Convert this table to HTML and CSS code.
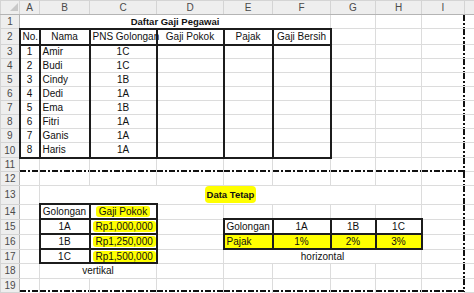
FILE: index.html
```html
<!DOCTYPE html>
<html lang="id">

<head>
    <meta charset="utf-8">
    <meta name="viewport" content="width=device-width, initial-scale=1.0">
    <title>Daftar Gaji Pegawai</title>

    <link rel="stylesheet" href="styles.css">
</head>

<body>
    <table class="sheet">
        <colgroup>
            <col class="w-rh">
            <col class="w-a">
            <col class="w-b">
            <col class="w-c">
            <col class="w-d">
            <col class="w-e">
            <col class="w-f">
            <col class="w-g">
            <col class="w-h">
            <col class="w-i">
            <col class="w-j">
        </colgroup>
        <thead>
            <tr class="heads">
                <th class="corner"><span class="tri"></span></th>
                <th>A</th><th>B</th><th>C</th><th>D</th><th>E</th>
                <th>F</th><th>G</th><th>H</th><th>I</th><th></th>
            </tr>
        </thead>
        <tbody>
            <tr>
                <th>1</th>
                <td colspan="6" class="judul">Daftar Gaji Pegawai</td>
                <td></td><td></td><td class="dd-r"></td><td></td>
            </tr>
            <tr class="h16">
                <th>2</th>
                <td class="box">No.</td>
                <td class="box">Nama</td>
                <td class="box">PNS Golongan</td>
                <td class="box">Gaji Pokok</td>
                <td class="box">Pajak</td>
                <td class="box">Gaji Bersih</td>
                <td></td><td></td><td class="dd-r"></td><td></td>
            </tr>
        </tbody>
        <tbody id="pegawai"></tbody>
        <tbody>
            <tr>
                <th>11</th>
                <td class="dd-b"></td><td class="dd-b"></td><td class="dd-b"></td><td class="dd-b"></td>
                <td class="dd-b"></td><td class="dd-b"></td><td class="dd-b"></td><td class="dd-b"></td>
                <td class="dd-b dd-r"></td><td></td>
            </tr>
            <tr>
                <th>12</th>
                <td></td><td></td><td></td><td></td><td></td><td></td><td></td><td></td>
                <td class="dd-r"></td><td></td>
            </tr>
            <tr class="h15">
                <th>13</th>
                <td></td>
                <td colspan="7" class="judul"><span class="stabilo besar">Data Tetap</span></td>
                <td class="dd-r"></td><td></td>
            </tr>
            <tr class="h15">
                <th>14</th>
                <td></td>
                <td class="box">Golongan</td>
                <td class="box"><span class="stabilo">Gaji Pokok</span></td>
                <td></td><td></td><td></td><td></td><td></td>
                <td class="dd-r"></td><td></td>
            </tr>
            <tr class="h15">
                <th>15</th>
                <td></td>
                <td class="box">1A</td>
                <td class="box"><span class="stabilo">Rp1,000,000</span></td>
                <td></td>
                <td class="box kiri">Golongan</td>
                <td class="box">1A</td>
                <td class="box">1B</td>
                <td class="box">1C</td>
                <td class="dd-r"></td><td></td>
            </tr>
            <tr class="h15">
                <th>16</th>
                <td></td>
                <td class="box">1B</td>
                <td class="box"><span class="stabilo">Rp1,250,000</span></td>
                <td></td>
                <td class="box kiri kuning">Pajak</td>
                <td class="box kuning">1%</td>
                <td class="box kuning">2%</td>
                <td class="box kuning">3%</td>
                <td class="dd-r"></td><td></td>
            </tr>
            <tr>
                <th>17</th>
                <td></td>
                <td class="box">1C</td>
                <td class="box"><span class="stabilo">Rp1,500,000</span></td>
                <td></td>
                <td colspan="4">horizontal</td>
                <td class="dd-r"></td><td></td>
            </tr>
            <tr class="h15">
                <th>18</th>
                <td></td>
                <td colspan="2">vertikal</td>
                <td></td><td></td><td></td><td></td><td></td>
                <td class="dd-r"></td><td></td>
            </tr>
            <tr>
                <th>19</th>
                <td class="dd-b"></td><td class="dd-b"></td><td class="dd-b"></td><td class="dd-b"></td>
                <td class="dd-b"></td><td class="dd-b"></td><td class="dd-b"></td><td class="dd-b"></td>
                <td class="dd-b dd-r"></td><td></td>
            </tr>
            <tr>
                <th></th>
                <td></td><td></td><td></td><td></td><td></td><td></td><td></td><td></td><td></td><td></td>
            </tr>
        </tbody>
    </table>

    <template>
        <tr>
            <th class="no-baris"></th>
            <td class="garis no"></td>
            <td class="garis kiri nama"></td>
            <td class="garis gol"></td>
            <td class="garis"></td>
            <td class="garis"></td>
            <td class="garis"></td>
            <td></td><td></td><td class="dd-r"></td><td></td>
        </tr>
    </template>

    <script>
        const pegawai = [
            ["Amir", "1C"],
            ["Budi", "1C"],
            ["Cindy", "1B"],
            ["Dedi", "1A"],
            ["Ema", "1B"],
            ["Fitri", "1A"],
            ["Ganis", "1A"],
            ["Haris", "1A"]
        ];

        const container = document.querySelector("#pegawai");
        const template = document.querySelector("template");

        pegawai.forEach((p, i) => {
            let klon = template.cloneNode(true).content;
            klon.querySelector(".no-baris").textContent = i + 3;
            klon.querySelector(".no").textContent = i + 1;
            klon.querySelector(".nama").textContent = p[0];
            klon.querySelector(".gol").textContent = p[1];
            // baris terakhir dapat garis tebal di bawah
            if (i == pegawai.length - 1) {
                klon.querySelector("tr").classList.add("akhir", "h15");
            }
            container.appendChild(klon);
        });
    </script>
</body>

</html>
```

FILE: styles.css
```css
* {
    box-sizing: border-box;
}

body {
    margin: 0;
    overflow: hidden;
    background: #fff;
    font-family: "Liberation Sans", Arial, sans-serif;
    font-size: 10px;
    color: #111;
}

.sheet {
    border-collapse: collapse;
    table-layout: fixed;
    width: 494px;
}

.w-rh { width: 19px; }
.w-a { width: 20px; }
.w-b { width: 50px; }
.w-c { width: 67px; }
.w-d { width: 67px; }
.w-e { width: 49px; }
.w-f { width: 58px; }
.w-g { width: 45px; }
.w-h { width: 46px; }
.w-i { width: 43px; }
.w-j { width: 30px; }

tr {
    height: 14px;
}

tr.h15 {
    height: 15px;
}

tr.h16 {
    height: 16px;
}

td {
    border: 1px solid #dcdcdc;
    padding: 0 2px;
    line-height: 11px;
    text-align: center;
    vertical-align: middle;
    white-space: nowrap;
}

th {
    background: #eeeeee;
    color: #4a4a4a;
    font-weight: normal;
    border: 1px solid #d4d4d4;
    padding: 0;
    line-height: 11px;
    text-align: center;
}

.heads th {
    border-bottom-color: #b4b4b4;
}

tbody th {
    border-right-color: #b4b4b4;
}

.corner {
    text-align: right;
    vertical-align: bottom;
    padding: 0 1px 1px 0;
}

.tri {
    display: inline-block;
    width: 0;
    height: 0;
    border-left: 8px solid transparent;
    border-bottom: 8px solid #c8c8c8;
}

.judul {
    font-weight: bold;
    font-size: 9.5px;
}

.kiri {
    text-align: left;
}

/* kotak tabel dengan garis tebal */
.box {
    border: 2px solid #1c1c1c;
}

.garis {
    border-left: 2px solid #1c1c1c;
    border-right: 2px solid #1c1c1c;
}

.akhir .garis {
    border-bottom: 2px solid #1c1c1c;
}

.kuning {
    background: #ffff00;
}

.stabilo {
    display: inline-block;
    background: #ffff00;
    border-radius: 3px;
    padding: 0 3px;
}

.stabilo.besar {
    padding: 3px 2px;
    border-radius: 4px;
}

/* garis putus-titik (dash dot) */
.dd-b {
    border-bottom-style: hidden;
    background-image: repeating-linear-gradient(to right, #111 0 6px, transparent 6px 8px, #111 8px 10px, transparent 10px 12px);
    background-size: 100% 2px;
    background-position: left bottom;
    background-repeat: no-repeat;
}

.dd-r {
    border-right-style: hidden;
    background-image: repeating-linear-gradient(to bottom, #111 0 6px, transparent 6px 8px, #111 8px 10px, transparent 10px 12px);
    background-size: 2px 100%;
    background-position: right top;
    background-repeat: no-repeat;
}

.dd-b.dd-r {
    background-image:
        repeating-linear-gradient(to right, #111 0 6px, transparent 6px 8px, #111 8px 10px, transparent 10px 12px),
        repeating-linear-gradient(to bottom, #111 0 6px, transparent 6px 8px, #111 8px 10px, transparent 10px 12px);
    background-size: 100% 2px, 2px 100%;
    background-position: left bottom, right top;
}
```
